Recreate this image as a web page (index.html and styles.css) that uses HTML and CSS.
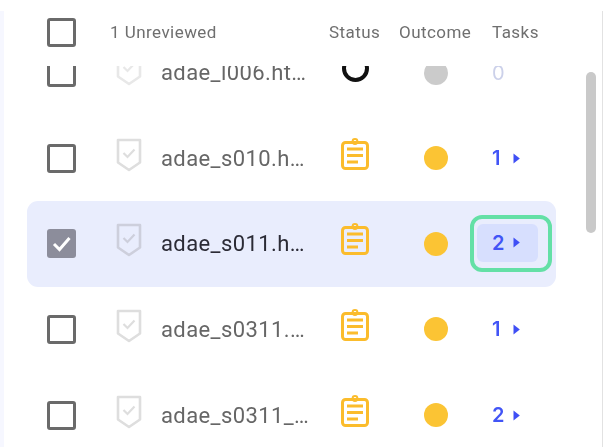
FILE: index.html
```html
<!DOCTYPE html>
<html lang="en">
<head>
<meta charset="utf-8">
<title>Documents</title>
<link rel="stylesheet" href="styles.css">
</head>
<body>
<svg class="defs" width="0" height="0" aria-hidden="true">
  <symbol id="shield" viewBox="0 0 26 34">
    <path d="M2 2H24V24.5L13 32L2 24.5Z" fill="none" stroke="currentColor" stroke-width="2.6" stroke-linejoin="round"/>
    <path d="M7.5 15L11.5 19L18.5 11.5" fill="none" stroke="currentColor" stroke-width="2.2"/>
  </symbol>
  <symbol id="clipboard" viewBox="0 0 28 32">
    <rect x="1.5" y="4.5" width="25" height="26" rx="3" fill="none" stroke="currentColor" stroke-width="3"/>
    <circle cx="14" cy="3.5" r="2.4" fill="none" stroke="currentColor" stroke-width="2"/>
    <path d="M6 11H22M6 17.5H22M6 24H17" fill="none" stroke="currentColor" stroke-width="2.8"/>
  </symbol>
  <symbol id="arrow" viewBox="0 0 7 11">
    <path d="M0.5 0.5L6.8 5.5L0.5 10.5Z" fill="currentColor"/>
  </symbol>
</svg>
<div class="shell">
  <div class="strip"></div>
  <main class="panel">
    <header class="grid head">
      <span class="box"></span>
      <span class="label">1 Unreviewed</span>
      <span class="label">Status</span>
      <span class="label">Outcome</span>
      <span class="label">Tasks</span>
    </header>
    <div class="list">
      <div class="rows">
        <div class="grid row">
          <span class="box"></span>
          <svg class="shield faint"><use href="#shield"/></svg>
          <span class="name">adae_l006.html</span>
          <span class="ring"></span>
          <span class="dot grey"></span>
          <span class="tasks none"><span class="num">0</span></span>
        </div>
        <div class="grid row">
          <span class="box"></span>
          <svg class="shield"><use href="#shield"/></svg>
          <span class="name">adae_s010.html</span>
          <svg class="clip"><use href="#clipboard"/></svg>
          <span class="dot"></span>
          <span class="tasks"><span class="num">1</span><svg class="arrow"><use href="#arrow"/></svg></span>
        </div>
        <div class="grid row selected">
          <span class="box checked"><svg viewBox="0 0 29 29"><path d="M7 15L12.5 20.5L22.5 9" fill="none" stroke="#fff" stroke-width="3"/></svg></span>
          <svg class="shield"><use href="#shield"/></svg>
          <span class="name">adae_s011.html</span>
          <svg class="clip"><use href="#clipboard"/></svg>
          <span class="dot"></span>
          <span class="ring-focus"><span class="tasks pill"><span class="num">2</span><svg class="arrow"><use href="#arrow"/></svg></span></span>
        </div>
        <div class="grid row">
          <span class="box"></span>
          <svg class="shield"><use href="#shield"/></svg>
          <span class="name">adae_s0311.html</span>
          <svg class="clip"><use href="#clipboard"/></svg>
          <span class="dot"></span>
          <span class="tasks"><span class="num">1</span><svg class="arrow"><use href="#arrow"/></svg></span>
        </div>
        <div class="grid row">
          <span class="box"></span>
          <svg class="shield"><use href="#shield"/></svg>
          <span class="name">adae_s0311_x.html</span>
          <svg class="clip"><use href="#clipboard"/></svg>
          <span class="dot"></span>
          <span class="tasks"><span class="num">2</span><svg class="arrow"><use href="#arrow"/></svg></span>
        </div>
      </div>
    </div>
    <div class="thumb"></div>
  </main>
</div>
</body>
</html>
```
FILE: styles.css
```css
* { box-sizing: border-box; }
html, body { margin: 0; height: 100%; background: #fff; overflow: hidden; }
body { font-family: Roboto, "Liberation Sans", sans-serif; }
.defs { position: absolute; }
.shell { display: flex; height: 447px; padding-top: 11px; filter: blur(0.4px); }
.strip { width: 4px; background: #f6f7ff; flex: none; }
.panel {
  position: relative;
  flex: 1;
  margin-top: -11px;
  padding-left: 23px;
  display: flex;
  flex-direction: column;
  height: 447px;
}
.panel::after {
  content: "";
  position: absolute;
  right: 0;
  top: 11px;
  bottom: 0;
  width: 1px;
  background: #e2e2e2;
}
.grid {
  display: grid;
  grid-template-columns: 63px 51px 168px 70px 93px 1fr;
  align-items: center;
  width: 529px;
  padding-left: 20px;
}
.head { height: 66px; flex: none; grid-template-columns: 63px 219px 70px 93px 1fr; padding-bottom: 1px; }
.label { margin-bottom: 2px; font-size: 17px; color: #6f6f6f; letter-spacing: 0.45px; white-space: nowrap; }
.list { flex: 1; overflow: hidden; }
.rows { margin-top: -36.33px; }
.row { height: 85.67px; border-radius: 11px; }
.selected { background: #e9edfd; }
.box {
  display: block;
  width: 29px;
  height: 29px;
  border: 3px solid #6a6a6a;
  border-radius: 3px;
}
.checked { background: #8c8d9b; border: 0; }
.checked svg { display: block; width: 29px; height: 29px; }
.shield { width: 26px; height: 34px; margin: -7px 0 0 6px; color: #dedede; }
.selected .shield { color: #cdcfdc; }
.faint { color: #e8e8e8; }
.name {
  width: 150px;
  font-size: 22px;
  color: #666;
  letter-spacing: 0.4px;
  white-space: nowrap;
  overflow: hidden;
  text-overflow: ellipsis;
}
.selected .name { color: #2b2b36; }
.clip { width: 28px; height: 32px; margin: -9px 0 0 12px; color: #fbbc2c; }
.ring {
  width: 27px;
  height: 27px;
  margin: -9px 0 0 13px;
  border: 4px solid #111;
  border-radius: 50%;
}
.dot { width: 24px; height: 24px; margin-left: 25px; border-radius: 50%; background: #fbc434; }
.grey { background: #cbcbcb; }
.tasks {
  display: flex;
  align-items: center;
  font-family: Inter, Roboto, sans-serif;
  font-weight: 600;
  font-size: 20px;
  color: #4255f6;
}
.num { width: 21px; }
.none { color: #ccd1ea; font-weight: 400; }
.arrow { width: 7px; height: 11px; color: #3f4ff5; }
.ring-focus {
  display: block;
  width: 82px;
  height: 57px;
  margin: -1px 0 0 -22px;
  padding: 5px 10px 6px 3px;
  border: 4px solid #64e0a6;
  border-radius: 12px;
}
.pill {
  width: 61px;
  height: 38px;
  padding-left: 15px;
  background: #d7dffe;
  border-radius: 6px;
}
.thumb {
  position: absolute;
  left: 582px;
  top: 72px;
  width: 10px;
  height: 161px;
  border-radius: 5px;
  background: #c9c9c9;
}
```
